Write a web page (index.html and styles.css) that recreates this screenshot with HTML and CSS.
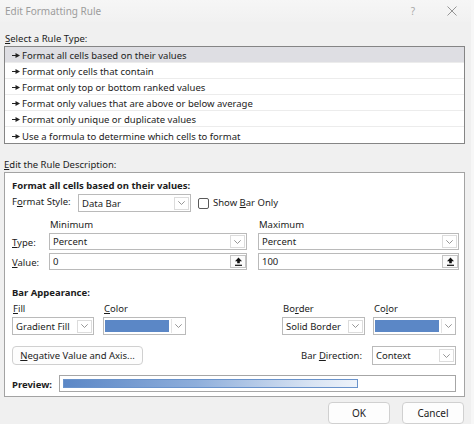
FILE: index.html
```html
<!DOCTYPE html>
<html>
<head>
<meta charset="utf-8">
<link rel="stylesheet" href="styles.css">
</head>
<body>
<div class="dialog">
  <div class="titlebar">
    <span class="title">Edit Formatting Rule</span>
    <span class="help">?</span>
    <svg class="close" width="10" height="10" viewBox="0 0 10 10"><path d="M0.5 0.5 L9.5 9.5 M9.5 0.5 L0.5 9.5" stroke="#8a8a8a" stroke-width="0.9" fill="none"/></svg>
  </div>

  <div class="section-label sel"><u>S</u>elect a Rule Type:</div>
  <ul class="rules">
    <li class="selected"><svg class="arr" width="8" height="5" viewBox="0 0 8 5"><path d="M0 2.5 H4" stroke="#222" stroke-width="1"/><path d="M3.5 0 L8 2.5 L3.5 5 Z" fill="#222"/></svg>Format all cells based on their values</li>
    <li><svg class="arr" width="8" height="5" viewBox="0 0 8 5"><path d="M0 2.5 H4" stroke="#222" stroke-width="1"/><path d="M3.5 0 L8 2.5 L3.5 5 Z" fill="#222"/></svg>Format only cells that contain</li>
    <li><svg class="arr" width="8" height="5" viewBox="0 0 8 5"><path d="M0 2.5 H4" stroke="#222" stroke-width="1"/><path d="M3.5 0 L8 2.5 L3.5 5 Z" fill="#222"/></svg>Format only top or bottom ranked values</li>
    <li><svg class="arr" width="8" height="5" viewBox="0 0 8 5"><path d="M0 2.5 H4" stroke="#222" stroke-width="1"/><path d="M3.5 0 L8 2.5 L3.5 5 Z" fill="#222"/></svg>Format only values that are above or below average</li>
    <li><svg class="arr" width="8" height="5" viewBox="0 0 8 5"><path d="M0 2.5 H4" stroke="#222" stroke-width="1"/><path d="M3.5 0 L8 2.5 L3.5 5 Z" fill="#222"/></svg>Format only unique or duplicate values</li>
    <li><svg class="arr" width="8" height="5" viewBox="0 0 8 5"><path d="M0 2.5 H4" stroke="#222" stroke-width="1"/><path d="M3.5 0 L8 2.5 L3.5 5 Z" fill="#222"/></svg>Use a formula to determine which cells to format</li>
  </ul>

  <div class="section-label desc"><u>E</u>dit the Rule Description:</div>
  <div class="group">
    <div class="heading">Format all cells based on their values:</div>

    <div class="style-row">
      <span class="style-label">F<u>o</u>rmat Style:</span>
      <div class="combo style-combo"><span class="ctext">Data Bar</span><span class="drop"><svg width="7" height="4" viewBox="0 0 7 4"><path d="M0.3 0.3 L3.5 3.5 L6.7 0.3" stroke="#8a8a8a" stroke-width="0.9" fill="none"/></svg></span></div>
      <span class="check"></span>
      <span class="check-label">Show <u>B</u>ar Only</span>
    </div>

    <div class="minmax">
      <span></span><span class="colhead">Minimum</span><span></span><span class="colhead">Maximum</span>
      <span class="rowlabel"><u>T</u>ype:</span>
      <div class="combo tall17"><span class="ctext">Percent</span><span class="drop"><svg width="7" height="4" viewBox="0 0 7 4"><path d="M0.3 0.3 L3.5 3.5 L6.7 0.3" stroke="#8a8a8a" stroke-width="0.9" fill="none"/></svg></span></div>
      <span></span>
      <div class="combo tall17"><span class="ctext">Percent</span><span class="drop"><svg width="7" height="4" viewBox="0 0 7 4"><path d="M0.3 0.3 L3.5 3.5 L6.7 0.3" stroke="#8a8a8a" stroke-width="0.9" fill="none"/></svg></span></div>
      <span class="rowlabel"><u>V</u>alue:</span>
      <div class="input tall17"><span class="ctext">0</span><span class="refbtn"><svg width="9" height="9" viewBox="0 0 9 9"><path d="M4.5 0.5 L8 4.2 H5.8 V6.3 H3.2 V4.2 H1 Z" fill="#111"/><path d="M1 8.3 H8" stroke="#111" stroke-width="1.2"/></svg></span></div>
      <span></span>
      <div class="input tall17"><span class="ctext">100</span><span class="refbtn"><svg width="9" height="9" viewBox="0 0 9 9"><path d="M4.5 0.5 L8 4.2 H5.8 V6.3 H3.2 V4.2 H1 Z" fill="#111"/><path d="M1 8.3 H8" stroke="#111" stroke-width="1.2"/></svg></span></div>
    </div>

    <div class="heading bar-heading">Bar Appearance:</div>
    <div class="appear-row">
      <div class="pair">
        <div class="field w82">
          <span class="flabel"><u>F</u>ill</span>
          <div class="combo"><span class="ctext">Gradient Fill</span><span class="drop"><svg width="7" height="4" viewBox="0 0 7 4"><path d="M0.3 0.3 L3.5 3.5 L6.7 0.3" stroke="#8a8a8a" stroke-width="0.9" fill="none"/></svg></span></div>
        </div>
        <div class="field w83">
          <span class="flabel"><u>C</u>olor</span>
          <div class="combo color-combo"><span class="swatch"></span><span class="cdrop"><svg width="7" height="4" viewBox="0 0 7 4"><path d="M0.3 0.3 L3.5 3.5 L6.7 0.3" stroke="#8a8a8a" stroke-width="0.9" fill="none"/></svg></span></div>
        </div>
      </div>
      <div class="pair right">
        <div class="field w83">
          <span class="flabel">Bo<u>r</u>der</span>
          <div class="combo"><span class="ctext">Solid Border</span><span class="drop"><svg width="7" height="4" viewBox="0 0 7 4"><path d="M0.3 0.3 L3.5 3.5 L6.7 0.3" stroke="#8a8a8a" stroke-width="0.9" fill="none"/></svg></span></div>
        </div>
        <div class="field w83">
          <span class="flabel">Co<u>l</u>or</span>
          <div class="combo color-combo"><span class="swatch"></span><span class="cdrop"><svg width="7" height="4" viewBox="0 0 7 4"><path d="M0.3 0.3 L3.5 3.5 L6.7 0.3" stroke="#8a8a8a" stroke-width="0.9" fill="none"/></svg></span></div>
        </div>
      </div>
    </div>

    <div class="neg-row">
      <button class="btn neg"><u>N</u>egative Value and Axis...</button>
      <div class="dir">
        <span class="dir-label">Bar <u>D</u>irection:</span>
        <div class="combo dir-combo"><span class="ctext">Context</span><span class="drop"><svg width="7" height="4" viewBox="0 0 7 4"><path d="M0.3 0.3 L3.5 3.5 L6.7 0.3" stroke="#8a8a8a" stroke-width="0.9" fill="none"/></svg></span></div>
      </div>
    </div>

    <div class="preview-row">
      <span class="preview-label">Preview:</span>
      <div class="preview-box"><div class="preview-bar"></div></div>
    </div>
  </div>

  <div class="footer">
    <button class="btn foot">OK</button>
    <button class="btn foot">Cancel</button>
  </div>
</div>
</body>
</html>
```

FILE: styles.css
```css
* { box-sizing: border-box; }
html, body { margin: 0; padding: 0; }
body {
  width: 474px;
  height: 424px;
  overflow: hidden;
  background: #f0f0f0;
  font-family: "Noto Sans", "Open Sans", sans-serif;
  font-size: 9.5px;
  color: #1c1c1c;
}
u { text-decoration: underline; text-underline-offset: 1px; }

.dialog {
  height: 424px;
  padding: 0 6px 0 4px;
  border-right: 3px solid #f7f7f7;
}

.titlebar {
  height: 22px;
  display: flex;
  align-items: center;
  margin: 0 -6px 0 -4px;
  padding: 0 14px 0 5px;
  background: linear-gradient(#f6f6f6, #f1f1f1);
}
.title { flex: 1; color: #9c9c9c; font-size: 10px; }
.help { width: 12px; text-align: center; color: #a8a8a8; font-size: 10px; margin-right: 28px; }
.close { display: block; }

.section-label { line-height: 14px; padding-left: 1px; }
.sel { margin-top: 10px; }
.desc { margin-top: 13px; padding-top: 1px; padding-left: 0; }

.rules {
  list-style: none;
  margin: 0;
  padding: 0;
  border: 1px solid #858585;
  background: #fff;
}
.rules li {
  height: 16px;
  display: flex;
  align-items: center;
  padding: 2px 0 0 7px;
  border-bottom: 1px solid #ececec;
  white-space: nowrap;
}
.rules li:last-child { border-bottom: none; }
.rules li.selected { background: #dedee3; }
.arr { margin-right: 2px; flex: none; }

.group {
  background: #fff;
  border: 1px solid #a3a3a3;
  padding: 6px 8px 4px 7px;
}
.heading { font-weight: bold; line-height: 14px; }

.style-row {
  margin-top: 1px;
  height: 18px;
  display: flex;
  align-items: center;
}
.style-label { width: 66px; margin-top: -3px; }
.style-combo { width: 113px; height: 18px; }
.check {
  width: 11px; height: 11px;
  margin-left: 7px;
  border: 1px solid #5a5a5a;
  border-radius: 2px;
  background: #fff;
}
.check-label { margin-left: 4px; margin-top: -1px; }

.combo, .input {
  display: flex;
  align-items: center;
  background: #fff;
  border: 1px solid #bababa;
  height: 18px;
}
.tall17 { height: 17px; }
.ctext { flex: 1; padding-left: 3px; white-space: nowrap; overflow: hidden; }
.drop {
  width: 15px;
  height: 13px;
  margin-right: 1px;
  border: 1px solid #dcdcdc;
  display: flex;
  align-items: center;
  justify-content: center;
}
.drop svg, .cdrop svg { display: block; }

.minmax {
  margin-top: 5px;
  display: grid;
  grid-template-columns: 37px 198px 11px 201px;
  grid-template-rows: 14px 17px 17px;
  row-gap: 2px;
}
.minmax > :nth-child(n+9) { margin-top: 1px; }
.colhead { line-height: 14px; padding: 1px 0 0 1px; }
.rowlabel { line-height: 17px; padding-top: 1px; }

.refbtn {
  width: 16px;
  height: 13px;
  border: 1px solid #c4c4c4;
  background: #fbfbfb;
  display: flex;
  align-items: center;
  justify-content: center;
}
.refbtn svg { display: block; }

.bar-heading { margin-top: 17px; }

.appear-row {
  margin-top: 2px;
  display: flex;
  justify-content: space-between;
}
.pair { display: flex; gap: 9px; }
.pair.right { gap: 8px; }
.field { display: flex; flex-direction: column; }
.w82 { width: 82px; }
.w83 { width: 83px; }
.flabel { line-height: 14px; margin-bottom: 1px; padding-left: 1px; }
.color-combo { padding: 2px 0 2px 1px; }
.swatch { width: 64px; height: 100%; background: #5b87c6; }
.cdrop { flex: 1; display: flex; align-items: center; justify-content: center; border-left: 1px solid #e4e4e4; height: 14px; margin-left: 2px; }

.neg-row {
  margin-top: 11px;
  display: flex;
  justify-content: space-between;
  align-items: center;
  height: 19px;
}
.btn {
  font-family: inherit;
  font-size: inherit;
  color: #1c1c1c;
  background: #fdfdfd;
  border: 1px solid #d0d0d0;
  border-radius: 4px;
  padding: 0;
}
.neg { width: 131px; height: 19px; }
.dir { display: flex; align-items: center; }
.dir-label { margin-right: 10px; }
.dir-combo { width: 84px; height: 19px; }

.preview-row {
  margin-top: 10px;
  display: flex;
  align-items: center;
}
.preview-label { width: 47px; font-weight: bold; padding-top: 2px; }
.preview-box {
  flex: 1;
  height: 17px;
  border: 1px solid #a6a6a6;
  padding: 3px;
}
.preview-bar {
  width: 295px;
  height: 9px;
  border: 1px solid #6a93cb;
  background: linear-gradient(to right, #5b87c6 0%, #8eaedb 45%, #d9e4f3 85%, #eef3fa 100%);
}

.footer {
  margin-top: 5px;
  display: flex;
  justify-content: flex-end;
  gap: 12px;
  padding-right: 1px;
}
.foot { width: 62px; height: 22px; font-size: 10px; padding-bottom: 1px; }
```
